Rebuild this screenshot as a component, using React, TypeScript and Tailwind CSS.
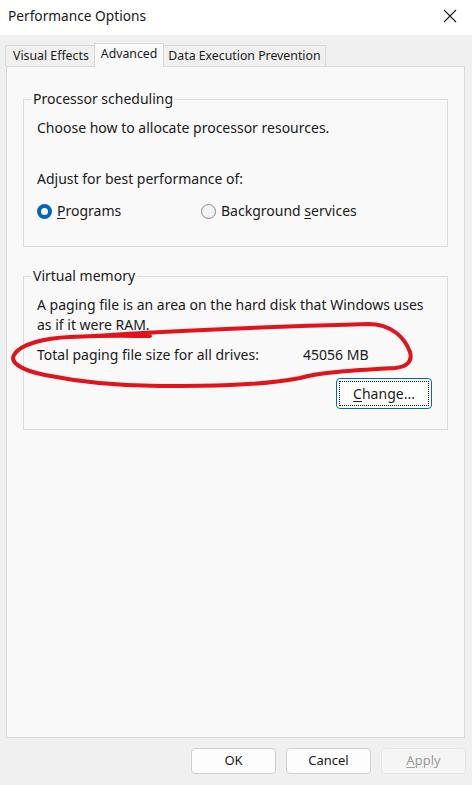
import React from 'react';

const font = { fontFamily: '"Noto Sans", "Open Sans", sans-serif' };

const Radio: React.FC<{ checked?: boolean }> = ({ checked }) =>
  checked ? (
    <span className="w-[15px] h-[15px] rounded-full bg-[#0067c0] flex items-center justify-center shrink-0">
      <span className="w-[7px] h-[7px] rounded-full bg-white" />
    </span>
  ) : (
    <span className="w-[15px] h-[15px] rounded-full border border-[#8a8a8a] bg-[#f3f3f3] shrink-0" />
  );

const GroupBox: React.FC<{ title: string; className?: string; children: React.ReactNode }> = ({
  title,
  className,
  children,
}) => (
  <div className={`relative border border-[#dcdcdc] ${className ?? ''}`}>
    <span className="absolute -top-[11px] left-[7px] px-[2px] bg-[#f9f9f9] text-[14px] leading-[20px] text-[#1a1a1a]">
      {title}
    </span>
    {children}
  </div>
);

export default function App() {
  return (
    <div className="relative w-[472px] h-[785px] bg-[#f0f0f0] flex flex-col text-[#1a1a1a] overflow-hidden" style={font}>
      {/* Title bar */}
      <div className="h-[35px] bg-white flex items-center justify-between pl-[8px] pr-[10px] shrink-0 pb-[3px]">
        <span className="text-[13.7px]">Performance Options</span>
        <svg width="14" height="14" viewBox="0 0 14 14" className="mr-[5px]">
          <path d="M1 1 L13 13 M13 1 L1 13" stroke="#1a1a1a" strokeWidth="1.1" fill="none" />
        </svg>
      </div>

      {/* Tabs */}
      <div className="flex items-end pl-[5px] h-[31px] shrink-0">
        <div className="h-[21px] pl-[7px] pr-[5px] border border-b-0 border-[#d9d9d9] bg-[#f0f0f0] text-[12.3px] leading-[20px]">
          Visual Effects
        </div>
        <div className="h-[24px] px-[6px] border border-b-0 border-[#d9d9d9] bg-[#f9f9f9] text-[12.3px] leading-[19px] -mx-[1px] relative z-10 -mb-[1px]">
          Advanced
        </div>
        <div className="h-[21px] px-[4px] border border-b-0 border-[#d9d9d9] bg-[#f0f0f0] text-[12.3px] leading-[20px]">
          Data Execution Prevention
        </div>
      </div>

      {/* Panel */}
      <div className="mx-[6px] w-[459px] h-[672px] bg-[#f9f9f9] border border-[#d9d9d9] pt-[32px] px-[16px] shrink-0">
        <GroupBox title="Processor scheduling" className="h-[148px]">
          <div className="pl-[13px] pt-[18px] text-[14px] leading-[20px]">
            <div>Choose how to allocate processor resources.</div>
            <div className="mt-[31px]">Adjust for best performance of:</div>
            <div className="flex items-center mt-[12px]">
              <div className="flex items-center gap-[5px] w-[164px]">
                <Radio checked />
                <span>
                  <span className="underline underline-offset-2">P</span>rograms
                </span>
              </div>
              <div className="flex items-center gap-[5px]">
                <Radio />
                <span>
                  Background <span className="underline underline-offset-2">s</span>ervices
                </span>
              </div>
            </div>
          </div>
        </GroupBox>

        <GroupBox title="Virtual memory" className="h-[154px] mt-[29px]">
          <div className="pl-[13px] pr-[10px] pt-[18px] text-[14px] leading-[20px]">
            <div>A paging file is an area on the hard disk that Windows uses as if it were RAM.</div>
            <div className="flex mt-[10px]">
              <span className="w-[266px]">Total paging file size for all drives:</span>
              <span>45056 MB</span>
            </div>
            <div className="flex justify-end pr-[5px] mt-[13px]">
              <button className="w-[96px] h-[31px] bg-white border border-[#0067c0] rounded-[4px] p-[2px]">
                <span className="block w-full h-full border border-dotted border-[#1a1a1a] text-[14px] leading-[24px]">
                  <span className="underline underline-offset-2">C</span>hange...
                </span>
              </button>
            </div>
          </div>
        </GroupBox>
      </div>

      {/* Buttons */}
      <div className="flex justify-end gap-[10px] pr-[6px] mt-[10px]">
        <button className="w-[85px] h-[26px] bg-[#fdfdfd] border border-[#d0d0d0] rounded-[4px] text-[13px]">OK</button>
        <button className="w-[85px] h-[26px] bg-[#fdfdfd] border border-[#d0d0d0] rounded-[4px] text-[13px]">Cancel</button>
        <button className="w-[85px] h-[26px] bg-[#f5f5f5] border border-[#e5e5e5] rounded-[4px] text-[13px] text-[#9d9d9d]">
          <span className="underline underline-offset-2">A</span>pply
        </button>
      </div>

      {/* Red annotation */}
      <svg className="absolute left-0 top-0 pointer-events-none" width="472" height="785" viewBox="0 0 472 785">
        <path
          d="M95 336 C 180 330, 300 326, 368 324 C 392 324, 405 338, 410 352 C 413 363, 405 367, 395 368 C 360 370, 320 372, 300 378 C 260 386, 200 386, 160 386 C 110 386, 70 380, 45 375 C 20 370, 10 362, 14 355 C 20 344, 45 338, 70 337 C 110 335, 130 336, 150 336"
          stroke="#e1141b"
          strokeWidth="4"
          fill="none"
          strokeLinecap="round"
        />
      </svg>
    </div>
  );
}
